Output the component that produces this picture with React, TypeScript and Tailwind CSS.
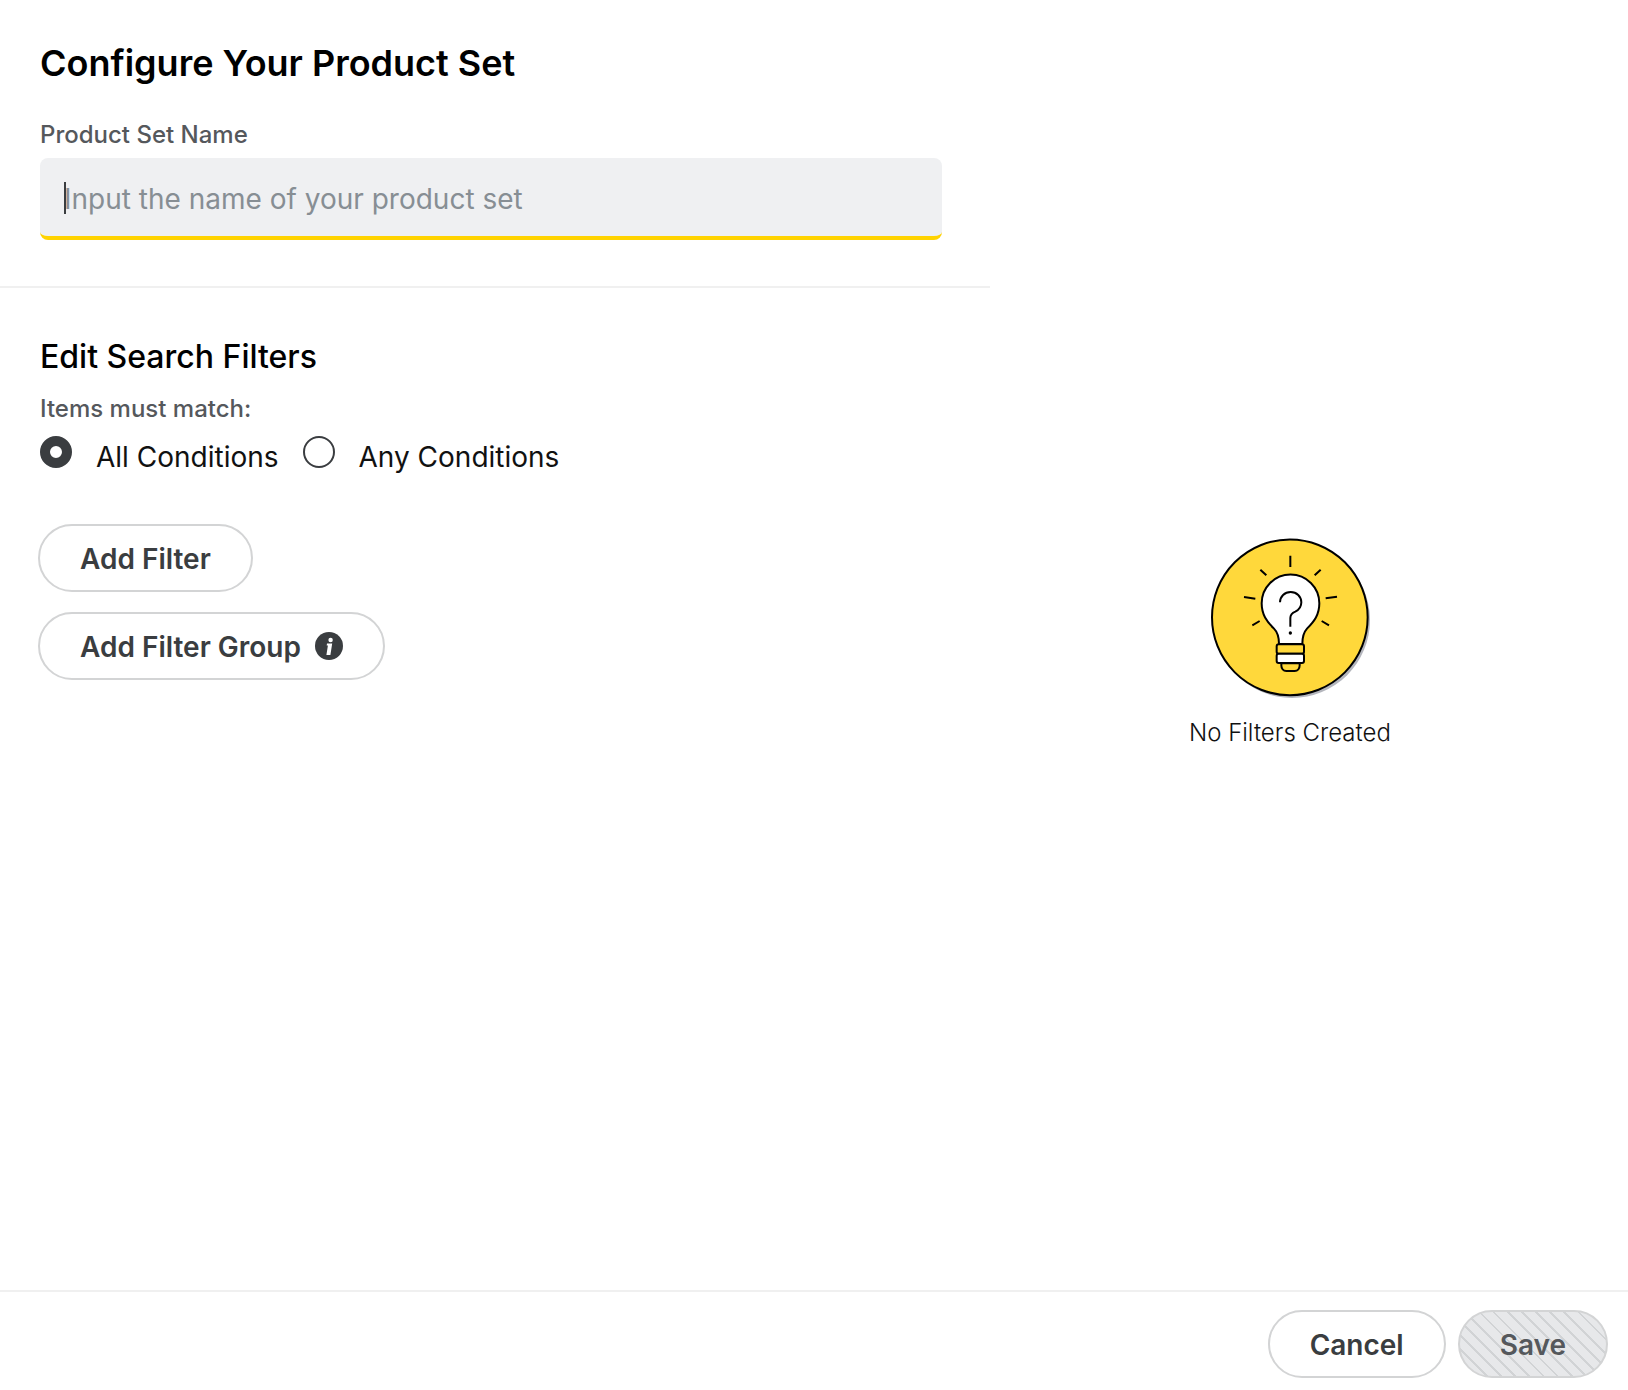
import { useState, type ChangeEvent } from "react";

type MatchMode = "all" | "any";

interface RadioOptionProps {
  id: string;
  label: string;
  checked: boolean;
  onSelect: () => void;
}

function RadioOption(props: RadioOptionProps) {
  return (
    <div className="flex items-start">
      <input
        id={props.id}
        className="appearance-none size-8 shrink-0 rounded-full bg-white border-2 border-[#3a3d40] checked:border-10"
        type="radio"
        name="match-mode"
        checked={props.checked}
        onChange={props.onSelect}
      />
      <label
        htmlFor={props.id}
        className="pt-[3px] pl-6 text-[28px] leading-9 font-normal text-[#111111]"
      >
        {props.label}
      </label>
    </div>
  );
}

function InfoIcon() {
  return (
    <svg className="size-7" viewBox="0 0 28 28" aria-hidden="true">
      <circle cx="14" cy="14" r="14" fill="#3a3d40" />
      <circle cx="15.6" cy="8" r="2.2" fill="#fff" />
      <path d="M12 11.600h5.200l-1.800 11.400h-4l1.500-9.600h-1.200z" fill="#fff" />
    </svg>
  );
}

function LightbulbImage() {
  return (
    <svg
      className="size-40"
      viewBox="120 54 480 480"
      fill="none"
      stroke="#000"
      strokeWidth="6"
      aria-hidden="true"
    >
      <circle cx="366" cy="300" r="234" fill="#b4b6bd" stroke="none" />
      <circle cx="359.5" cy="292" r="233.5" fill="#ffd83b" />
      <path d="M361 107v34M271 149l18 17M452 149l-18 17M222 231l34 5M501 230l-34 5M247 316l22-13M477 316l-22-13" />
      <path
        d="M327 372c0-20-3-34-15-46-22-22-37-42-37-76a86.500 86.500 0 0 1 173 0c0 34-15 54-37 76-11 12-14 26-14 46z"
        fill="#fff"
      />
      <path
        d="M334 430v6c0 10 6 17 15 17h25c9 0 15-7 15-17v-6z"
        fill="#ffd83b"
      />
      <rect x="320" y="373" width="82" height="28" rx="6" fill="#ffd83b" />
      <rect x="320" y="401" width="82" height="28" rx="6" fill="#fff" />
      <path d="M330 247c0-18 14-31 32-31s32 13 32 31c0 15-8 23-18 28-10 4-15 9-15 19v26" />
      <circle cx="361" cy="339" r="5" fill="#000" stroke="none" />
    </svg>
  );
}

const buttonClasses =
  "flex items-center h-17 px-10 rounded-full border-2 border-[#d3d4d5] text-[28px] font-semibold";

function App() {
  const [name, setName] = useState<string>("");
  const [matchMode, setMatchMode] = useState<MatchMode>("all");

  function handleNameChange(event: ChangeEvent<HTMLInputElement>) {
    setName(event.target.value);
  }

  return (
    <div className="flex flex-col min-h-screen bg-white font-['Inter',sans-serif] text-black">
      <main className="flex grow">
        <div className="w-[60.8%] shrink-0">
          <section className="pt-10 pb-[46px] px-10 pr-12 border-b-2 border-[#f0f0f0]">
            <h1 className="text-[36px] leading-[46px] font-semibold">
              Configure Your Product Set
            </h1>
            <label
              htmlFor="set-name"
              className="block pt-[34px] pb-2 text-[24px] leading-[30px] font-medium text-[#55585c]"
            >
              Product Set Name
            </label>
            <div className="relative">
              <input
                id="set-name"
                className="block w-full h-[82px] px-6 pt-1 rounded-lg bg-[#eff0f2] border-b-4 border-[#ffd300] outline-0 text-[28px] font-normal text-[#3a3d40] placeholder:text-[#878e94] caret-transparent"
                type="text"
                placeholder="Input the name of your product set"
                value={name}
                onChange={handleNameChange}
              />
              {name === "" && (
                <span className="absolute left-6 top-6 w-0.5 h-8 bg-[#3a3d40]" />
              )}
            </div>
          </section>
          <section className="pt-[49px] pl-10">
            <h2 className="text-[32px] leading-10 font-medium">
              Edit Search Filters
            </h2>
            <fieldset className="pt-4">
              <legend className="float-left w-full pb-[11px] text-[24px] leading-8 font-medium text-[#55585c]">
                Items must match:
              </legend>
              <div className="flex w-full gap-6">
                <RadioOption
                  id="match-all"
                  label="All Conditions"
                  checked={matchMode === "all"}
                  onSelect={() => setMatchMode("all")}
                />
                <RadioOption
                  id="match-any"
                  label="Any Conditions"
                  checked={matchMode === "any"}
                  onSelect={() => setMatchMode("any")}
                />
              </div>
            </fieldset>
            <div className="flex flex-col items-start gap-5 pt-[49px] -ml-0.5 text-[#3a3d40]">
              <button type="button" className={buttonClasses}>
                <span className="pt-0.5">Add Filter</span>
              </button>
              <button type="button" className={buttonClasses + " gap-3.5"}>
                <span className="pt-0.5">Add Filter Group</span>
                <InfoIcon />
              </button>
            </div>
          </section>
        </div>
        <aside className="flex flex-col grow items-center justify-center gap-[19px] pr-[38px] pb-[3px]">
          <LightbulbImage />
          <p className="text-[24px] leading-8 font-light text-[#111111]">
            No Filters Created
          </p>
        </aside>
      </main>
      <footer className="flex justify-end gap-3 pt-[18px] pb-3 px-5 border-t-2 border-[#f0f0f0]">
        <button type="button" className={buttonClasses + " text-[#3a3d40]"}>
          <span className="pt-0.5">Cancel</span>
        </button>
        <button
          type="button"
          disabled
          className={
            buttonClasses +
            " text-[#55585c] bg-[#e7e8ea] bg-[repeating-linear-gradient(45deg,transparent_0_8px,#d1d3d5_8px_10px)]"
          }
        >
          <span className="pt-0.5">Save</span>
        </button>
      </footer>
    </div>
  );
}

export default App;
